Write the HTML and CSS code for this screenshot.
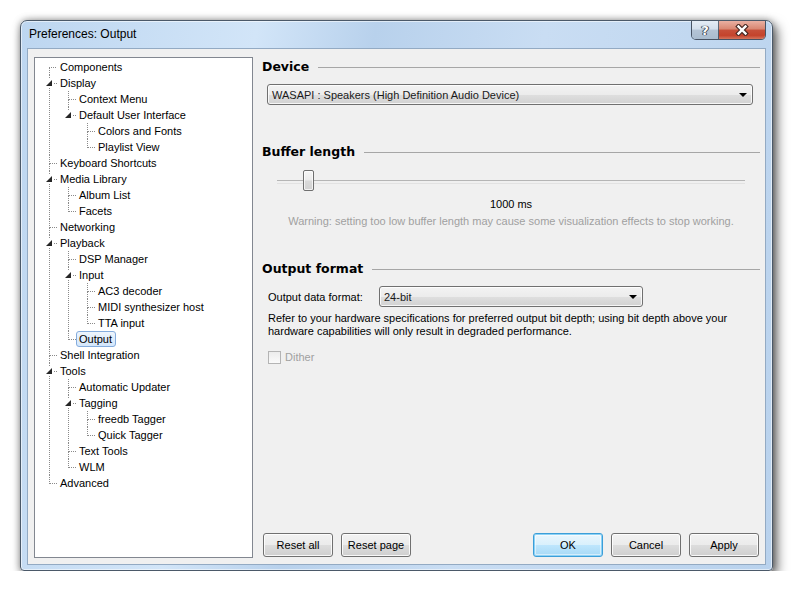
FILE: index.html
```html
<!DOCTYPE html>
<html lang="en">
<head>
  <meta charset="UTF-8" />
  <title>Preferences: Output</title>

  <!-- ====== STYLES ====== -->
  <link rel="stylesheet" href="styles.css">
</head>
<body>

  <div class="window">
    <!-- Title bar -->
    <div class="titlebar">
      <span class="title">Preferences: Output</span>
      <div class="caption-btns">
        <span class="cap-btn help">?</span>
        <span class="cap-btn close">
          <svg width="16" height="12" viewBox="0 0 16 12">
            <path d="M4.5 2.5 L11.5 9.5 M11.5 2.5 L4.5 9.5" stroke="#4a2a24" stroke-width="4.6" stroke-linecap="square"/>
            <path d="M4.5 2.5 L11.5 9.5 M11.5 2.5 L4.5 9.5" stroke="#fff" stroke-width="2.4" stroke-linecap="square"/>
          </svg>
        </span>
      </div>
    </div>

    <div class="client">
      <!-- ====== TREE ====== -->
      <div class="tree">
        <ul class="root">
          <li><span class="label">Components</span></li>
          <li><i class="exp"></i><span class="label">Display</span>
            <ul>
              <li><span class="label">Context Menu</span></li>
              <li><i class="exp"></i><span class="label">Default User Interface</span>
                <ul>
                  <li><span class="label">Colors and Fonts</span></li>
                  <li><span class="label">Playlist View</span></li>
                </ul>
              </li>
            </ul>
          </li>
          <li><span class="label">Keyboard Shortcuts</span></li>
          <li><i class="exp"></i><span class="label">Media Library</span>
            <ul>
              <li><span class="label">Album List</span></li>
              <li><span class="label">Facets</span></li>
            </ul>
          </li>
          <li><span class="label">Networking</span></li>
          <li><i class="exp"></i><span class="label">Playback</span>
            <ul>
              <li><span class="label">DSP Manager</span></li>
              <li><i class="exp"></i><span class="label">Input</span>
                <ul>
                  <li><span class="label">AC3 decoder</span></li>
                  <li><span class="label">MIDI synthesizer host</span></li>
                  <li><span class="label">TTA input</span></li>
                </ul>
              </li>
              <li><span class="label selected">Output</span></li>
            </ul>
          </li>
          <li><span class="label">Shell Integration</span></li>
          <li><i class="exp"></i><span class="label">Tools</span>
            <ul>
              <li><span class="label">Automatic Updater</span></li>
              <li><i class="exp"></i><span class="label">Tagging</span>
                <ul>
                  <li><span class="label">freedb Tagger</span></li>
                  <li><span class="label">Quick Tagger</span></li>
                </ul>
              </li>
              <li><span class="label">Text Tools</span></li>
              <li><span class="label">WLM</span></li>
            </ul>
          </li>
          <li><span class="label">Advanced</span></li>
        </ul>
      </div>

      <!-- ====== PAGE ====== -->
      <div class="page">
        <div class="group-title">Device</div>
        <div class="combo device-combo">WASAPI : Speakers (High Definition Audio Device)</div>

        <div class="group-title buffer-title">Buffer length</div>
        <div class="slider"><span class="thumb"></span></div>
        <div class="value">1000 ms</div>
        <div class="warning">Warning: setting too low buffer length may cause some visualization effects to stop working.</div>

        <div class="group-title output-title">Output format</div>
        <div class="format-row">
          <span class="field-label">Output data format:</span>
          <div class="combo format-combo">24-bit</div>
        </div>
        <p class="note">Refer to your hardware specifications for preferred output bit depth; using bit depth above your<br>hardware capabilities will only result in degraded performance.</p>
        <label class="check"><span class="box"></span>Dither</label>

        <!-- Buttons -->
        <div class="footer">
          <div class="btn-group">
            <button class="btn">Reset all</button>
            <button class="btn">Reset page</button>
          </div>
          <div class="btn-group">
            <button class="btn default">OK</button>
            <button class="btn">Cancel</button>
            <button class="btn">Apply</button>
          </div>
        </div>
      </div>
    </div>
  </div>

</body>
</html>
```

FILE: styles.css
```css
/* Reset */
*{margin:0;padding:0;box-sizing:border-box}

body{
  background:#fff;
  font-family:"Liberation Sans",Arial,sans-serif;
  font-size:11px;color:#000
}

/* === Window frame === */
.window{
  margin:20px 0 0 20px;width:753px;height:551px;
  border:1px solid #4b5969;border-radius:7px 7px 4px 4px;
  background:linear-gradient(100deg,#bdd6f0 0%,#d2e5f8 28%,#b8d1ec 42%,#c9ddf3 62%,#b9d2ed 100%);
  box-shadow:4px 5px 12px rgba(0,0,0,.6),0 0 7px rgba(0,0,0,.35),inset 0 0 0 1px rgba(255,255,255,.55);
  display:flex;flex-direction:column
}

.titlebar{height:27px;display:flex;align-items:flex-start;padding:0 6px 0 8px}
.title{font-size:12px;line-height:27px;color:#000}

.caption-btns{
  margin-left:auto;display:flex;height:19px;
  border:1px solid rgba(40,50,66,.8);border-top:0;border-radius:0 0 5px 5px;overflow:hidden
}
.cap-btn{display:flex;justify-content:center;align-items:center;height:100%}
.help{
  width:27px;border-right:1px solid rgba(40,50,66,.7);
  background:linear-gradient(#e4ecf5 0%,#d3dfec 45%,#b4c4d6 50%,#a9bccf 100%);
  color:#fff;font:bold 13px "DejaVu Sans",sans-serif;
  text-shadow:0 0 1px #2c3440,0 0 1px #2c3440,1px 0 0 #4a5463,-1px 0 0 #4a5463
}
.close{
  width:46px;
  background:linear-gradient(#eab0a2 0%,#d98671 45%,#c7503a 50%,#c4432c 80%,#d5745c 100%)
}

.client{
  flex:1;margin:0 6px 5px;
  background:#f0f0f0;border:1px solid #93aac3;
  display:flex;padding:8px 5px 6px 6px;gap:9px
}

/* === Tree === */
.tree{
  width:219px;height:501px;flex:none;
  background:#fff;border:1px solid #828790;padding-top:1px
}
.tree ul{list-style:none;padding-left:19px}
.tree ul.root{padding-left:22px}
.tree li{position:relative;line-height:16px}
.tree li::before{
  content:"";position:absolute;left:-8px;top:0;width:7px;height:8px;
  border-left:1px dotted #8a8a8a;border-bottom:1px dotted #8a8a8a
}
.tree li:not(:last-child)::after{
  content:"";position:absolute;left:-8px;top:8px;bottom:0;border-left:1px dotted #8a8a8a
}
.tree .root>li:first-child::before{border-left:0}

.exp{position:absolute;left:-13px;top:3px;width:10px;height:10px;background:#fff;z-index:1}
.exp::after{
  content:"";position:absolute;left:2px;top:2px;width:6px;height:6px;
  background:#262626;clip-path:polygon(100% 0,100% 100%,0 100%)
}

.label{
  display:inline-block;vertical-align:top;line-height:14px;
  padding:0 3px 0 2px;border:1px solid transparent;white-space:nowrap
}
.label.selected{
  border-color:#84acdd;border-radius:3px;
  background:linear-gradient(#eef5fd,#d3e6fb)
}

/* === Page === */
.page{flex:1;display:flex;flex-direction:column;padding-bottom:1px}

.group-title{
  display:flex;align-items:center;gap:9px;margin-top:2px;
  font:bold 12.5px/16px "DejaVu Sans",sans-serif;color:#000
}
.group-title::after{content:"";flex:1;border-top:1px solid #a6a6a6}
.buffer-title{margin-top:39px}
.output-title{margin-top:33px}

.combo{
  height:21px;display:flex;align-items:center;padding:0 5px 0 4px;
  border:1px solid #707070;border-radius:3px;
  background:linear-gradient(#f3f3f3 0%,#ececec 50%,#dfdfdf 50%,#d2d2d2 100%);
  box-shadow:inset 0 0 0 1px rgba(255,255,255,.8);color:#1a1a1a
}
.combo::after{
  content:"";margin-left:auto;
  border-left:4px solid transparent;border-right:4px solid transparent;border-top:4px solid #000
}
.device-combo{margin:9px 7px 0 5px}

.slider{position:relative;height:21px;margin:10px 15px 0}
.slider::before{
  content:"";position:absolute;left:0;right:0;top:10px;height:2px;
  border-top:1px solid #b5b5b5;border-bottom:1px solid #e2e2e2
}
.thumb{
  position:absolute;left:26px;top:0;width:11px;height:21px;
  border:1px solid #6f6f6f;border-radius:2px;
  background:linear-gradient(#f6f6f6 0%,#ececec 45%,#d9d9d9 55%,#d2d2d2 100%);
  box-shadow:inset 0 0 0 1px rgba(255,255,255,.7)
}

.value{margin-top:7px;line-height:13px;text-align:center}
.warning{margin-top:4px;line-height:13px;text-align:center;color:#a0a0a0}

.format-row{display:flex;align-items:center;margin:9px 0 0 6px}
.field-label{width:111px}
.format-combo{width:264px}

.note{margin:5px 0 0 6px;line-height:13px}

.check{display:flex;align-items:center;gap:4px;margin:13px 0 0 6px;line-height:13px;color:#a0a0a0}
.box{
  width:13px;height:13px;border:1px solid #b4b4b4;
  background:linear-gradient(#ececec,#fafafa)
}

/* Buttons */
.footer{margin-top:auto;display:flex;justify-content:space-between;padding:0 1px}
.btn-group{display:flex;gap:8px}
.btn{
  width:70px;height:24px;font:11px "Liberation Sans",Arial,sans-serif;color:#000;
  border:1px solid #707070;border-radius:3px;
  background:linear-gradient(#f2f2f2 0%,#ebebeb 50%,#dddddd 50%,#cfcfcf 100%);
  box-shadow:inset 0 0 0 1px rgba(255,255,255,.85)
}
.btn.default{
  border-color:#3c9ed8;
  background:linear-gradient(#eaf6fd 0%,#d9f0fc 50%,#bee6fd 50%,#a7d9f5 100%);
  box-shadow:inset 0 0 0 1px #8cd2f6,inset 0 0 0 2px rgba(255,255,255,.5)
}
```
